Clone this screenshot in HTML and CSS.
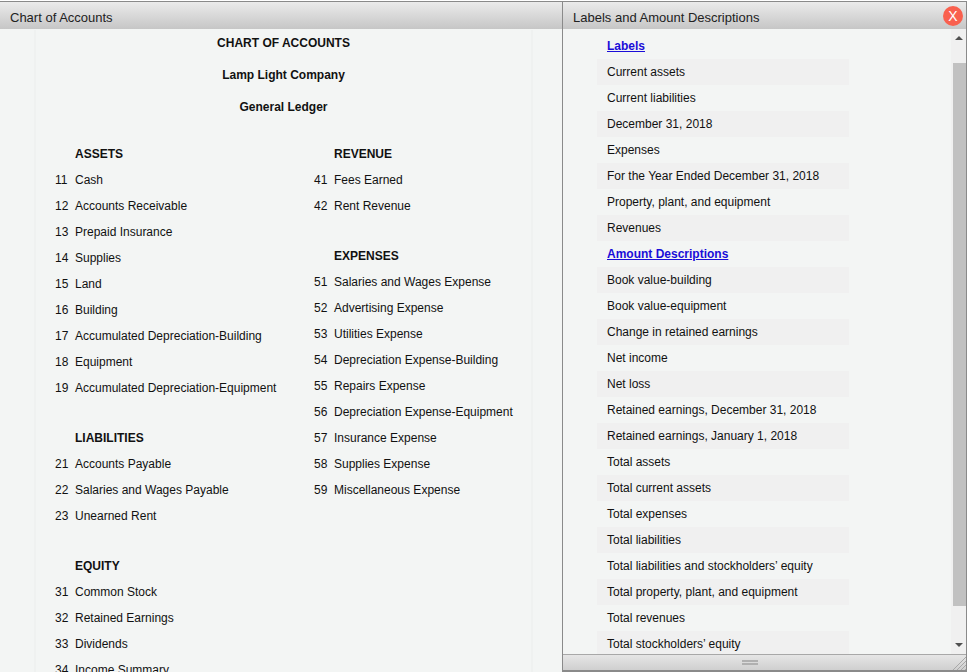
FILE: index.html
```html
<!DOCTYPE html>
<html lang="en">
<head>
<meta charset="utf-8">
<title>Chart of Accounts</title>
<link rel="stylesheet" href="styles.css">
</head>
<body>
<div class="desk">
  <section class="panel left">
    <header class="bar"><h2>Chart of Accounts</h2></header>
    <div class="sheet-wrap">
      <div class="sheet">
        <div class="title">CHART OF ACCOUNTS</div>
        <div class="title">Lamp Light Company</div>
        <div class="title">General Ledger</div>
        <div class="cols">
          <div class="col">
            <div class="head">ASSETS</div>
            <div class="row"><span class="no">11</span>Cash</div>
            <div class="row"><span class="no">12</span>Accounts Receivable</div>
            <div class="row"><span class="no">13</span>Prepaid Insurance</div>
            <div class="row"><span class="no">14</span>Supplies</div>
            <div class="row"><span class="no">15</span>Land</div>
            <div class="row"><span class="no">16</span>Building</div>
            <div class="row"><span class="no">17</span>Accumulated Depreciation-Building</div>
            <div class="row"><span class="no">18</span>Equipment</div>
            <div class="row"><span class="no">19</span>Accumulated Depreciation-Equipment</div>
            <div class="head gap">LIABILITIES</div>
            <div class="row"><span class="no">21</span>Accounts Payable</div>
            <div class="row"><span class="no">22</span>Salaries and Wages Payable</div>
            <div class="row"><span class="no">23</span>Unearned Rent</div>
            <div class="head gap">EQUITY</div>
            <div class="row"><span class="no">31</span>Common Stock</div>
            <div class="row"><span class="no">32</span>Retained Earnings</div>
            <div class="row"><span class="no">33</span>Dividends</div>
            <div class="row"><span class="no">34</span>Income Summary</div>
          </div>
          <div class="col">
            <div class="head">REVENUE</div>
            <div class="row"><span class="no">41</span>Fees Earned</div>
            <div class="row"><span class="no">42</span>Rent Revenue</div>
            <div class="head gap">EXPENSES</div>
            <div class="row"><span class="no">51</span>Salaries and Wages Expense</div>
            <div class="row"><span class="no">52</span>Advertising Expense</div>
            <div class="row"><span class="no">53</span>Utilities Expense</div>
            <div class="row"><span class="no">54</span>Depreciation Expense-Building</div>
            <div class="row"><span class="no">55</span>Repairs Expense</div>
            <div class="row"><span class="no">56</span>Depreciation Expense-Equipment</div>
            <div class="row"><span class="no">57</span>Insurance Expense</div>
            <div class="row"><span class="no">58</span>Supplies Expense</div>
            <div class="row"><span class="no">59</span>Miscellaneous Expense</div>
          </div>
        </div>
      </div>
    </div>
  </section>
  <section class="panel right">
    <header class="bar"><h2>Labels and Amount Descriptions</h2><button class="close" type="button">X</button></header>
    <div class="body">
      <ul class="list">
        <li class="link"><a href="#labels">Labels</a></li>
        <li>Current assets</li>
        <li>Current liabilities</li>
        <li>December 31, 2018</li>
        <li>Expenses</li>
        <li>For the Year Ended December 31, 2018</li>
        <li>Property, plant, and equipment</li>
        <li>Revenues</li>
        <li class="link"><a href="#amounts">Amount Descriptions</a></li>
        <li>Book value-building</li>
        <li>Book value-equipment</li>
        <li>Change in retained earnings</li>
        <li>Net income</li>
        <li>Net loss</li>
        <li>Retained earnings, December 31, 2018</li>
        <li>Retained earnings, January 1, 2018</li>
        <li>Total assets</li>
        <li>Total current assets</li>
        <li>Total expenses</li>
        <li>Total liabilities</li>
        <li>Total liabilities and stockholders’ equity</li>
        <li>Total property, plant, and equipment</li>
        <li>Total revenues</li>
        <li>Total stockholders’ equity</li>
      </ul>
      <div class="scroll">
        <svg class="arrow up" width="8" height="4" viewBox="0 0 8 4"><path d="M4 0 8 4H0z" fill="#505050"/></svg>
        <div class="track"><div class="thumb"></div></div>
        <svg class="arrow down" width="8" height="4" viewBox="0 0 8 4"><path d="M0 0H8L4 4z" fill="#505050"/></svg>
      </div>
    </div>
    <footer class="foot">
      <span class="grip"></span>
      <svg class="hatch" width="14" height="14" viewBox="0 0 14 14"><path d="M14 1 1 14M14 5 5 14M14 9 9 14M14 13 13 14" stroke="#a8a8a8" fill="none"/></svg>
    </footer>
  </section>
</div>
</body>
</html>
```
FILE: styles.css
```css
* { box-sizing: border-box; }
html, body { margin: 0; height: 100%; background: #fff; overflow: hidden; }
body { padding-top: 1px; font: 12px/26px "Liberation Sans", Arial, sans-serif; color: #111; }
.desk { display: flex; width: 967px; height: 671px; }
.panel { display: flex; flex-direction: column; background: #f3f5f4; }
.left { width: 562px; height: 671px; border-top: 1px solid #8a8a8a; }
.right { width: 405px; height: 671px; border: 2px solid #8a8a8a; border-width: 1px 1px 2px 1px; position: relative; }
.bar { flex: none; height: 27px; display: flex; align-items: center; padding: 4px 10px 0; background: linear-gradient(#ebebeb, #c6c6c6); }
.bar h2 { margin: 0; font-size: 13px; font-weight: 400; color: #222; }
.close { position: absolute; top: 4px; right: 3px; width: 20px; height: 20px; padding: 0; border: 0; border-radius: 50%; background: #f9604e; color: #fff; font: 14px/20px "Liberation Sans", Arial, sans-serif; text-align: center; }
.sheet-wrap { flex: 1; min-height: 0; padding: 1px 29px 0 34px; overflow: hidden; }
.sheet { height: 100%; border-left: 2px solid #eff1f0; border-right: 2px solid #eff1f0; overflow: hidden; }
.title { height: 32px; line-height: 26px; font-weight: 700; text-align: center; }
.cols { display: flex; padding: 15px 0 0 18px; }
.col { width: 259px; flex: none; }
.head { height: 26px; padding-left: 21px; font-weight: 700; }
.gap { margin-top: 24px; }
.row { height: 26px; white-space: nowrap; }
.no { display: inline-block; width: 21px; padding-left: 1px; }
.body { flex: 1; min-height: 0; display: flex; background: #f3f5f4; }
.list { flex: 1; margin: 0; padding: 4px 0 0 34px; list-style: none; overflow: hidden; }
.list li { width: 252px; height: 26px; padding-left: 10px; white-space: nowrap; }
.list li:nth-child(even) { background: #f0f0f0; }
.link { font-weight: 700; }
.link a { color: #1a0dd8; }
.scroll { flex: none; width: 15px; display: flex; flex-direction: column; align-items: center; background: #f0f0f0; }
.arrow { flex: none; }
.up { margin: 7px 0 6px; }
.down { margin: 6px 0 7px; }
.track { flex: 1; width: 100%; padding: 17px 0 31px 2px; }
.thumb { height: 100%; background: #c1c1c1; }
.foot { flex: none; height: 16px; display: flex; align-items: center; justify-content: center; position: relative; padding-right: 29px; border-top: 1px solid #a8a8a8; background: linear-gradient(#e6e6e6, #cfcfcf); }
.grip { width: 16px; height: 5px; border-top: 2px solid #b0b0b0; border-bottom: 2px solid #b0b0b0; }
.hatch { position: absolute; right: 0; bottom: 0; }
```
